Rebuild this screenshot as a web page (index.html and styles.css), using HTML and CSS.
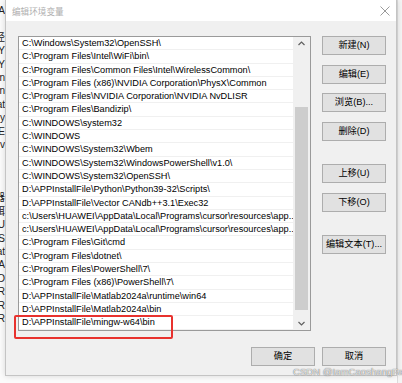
FILE: index.html
```html
<!DOCTYPE html>
<html lang="zh-CN">
<head>
    <meta charset="UTF-8">
    <meta name="viewport" content="width=device-width, initial-scale=1.0">
    <title>编辑环境变量</title>
    <link rel="stylesheet" href="styles.css">
</head>
<body>
    <div class="desk">
        <!-- window behind the dialog, only its edges show -->
        <div class="back-left">
            <span>A</span><span></span><span>径</span><span>Y</span><span>Y</span><span>en</span><span>en</span><span>at</span><span>y</span><span>E</span><span>v</span>
            <span></span><span></span><span></span><span>器</span><span>铒</span><span>U</span><span>S</span><span>at</span><span>A</span><span>O</span><span>R</span><span>R</span><span>R</span>
        </div>
        <div class="back-right"></div>

        <div class="dialog">
            <div class="titlebar">
                <span class="title">编辑环境变量</span>
                <svg class="close" width="10" height="10" viewBox="0 0 10 10">
                    <path d="M0.5 0.5 L9.5 9.5 M9.5 0.5 L0.5 9.5" stroke="#9a9a9a" stroke-width="1" fill="none"/>
                </svg>
            </div>
            <div class="dialog-body">
                <div class="main">
                    <div class="listbox">
                        <ul class="paths">
                            <li>C:\Windows\System32\OpenSSH\</li>
                            <li>C:\Program Files\Intel\WiFi\bin\</li>
                            <li>C:\Program Files\Common Files\Intel\WirelessCommon\</li>
                            <li>C:\Program Files (x86)\NVIDIA Corporation\PhysX\Common</li>
                            <li>C:\Program Files\NVIDIA Corporation\NVIDIA NvDLISR</li>
                            <li>C:\Program Files\Bandizip\</li>
                            <li>C:\WINDOWS\system32</li>
                            <li>C:\WINDOWS</li>
                            <li>C:\WINDOWS\System32\Wbem</li>
                            <li>C:\WINDOWS\System32\WindowsPowerShell\v1.0\</li>
                            <li>C:\WINDOWS\System32\OpenSSH\</li>
                            <li>D:\APPInstallFile\Python\Python39-32\Scripts\</li>
                            <li>D:\APPInstallFile\Vector CANdb++3.1\Exec32</li>
                            <li>c:\Users\HUAWEI\AppData\Local\Programs\cursor\resources\app...</li>
                            <li>c:\Users\HUAWEI\AppData\Local\Programs\cursor\resources\app...</li>
                            <li>C:\Program Files\Git\cmd</li>
                            <li>C:\Program Files\dotnet\</li>
                            <li>C:\Program Files\PowerShell\7\</li>
                            <li>C:\Program Files (x86)\PowerShell\7\</li>
                            <li>D:\APPInstallFile\Matlab2024a\runtime\win64</li>
                            <li>D:\APPInstallFile\Matlab2024a\bin</li>
                            <li>D:\APPInstallFile\mingw-w64\bin</li>
                        </ul>
                        <div class="scrollbar">
                            <svg class="arrow" width="17" height="14" viewBox="0 0 17 14">
                                <path d="M5.5 8 L8.5 5 L11.5 8" stroke="#606060" stroke-width="1.2" fill="none"/>
                            </svg>
                            <div class="track"><div class="thumb"></div></div>
                            <svg class="arrow" width="17" height="14" viewBox="0 0 17 14">
                                <path d="M5.5 6 L8.5 9 L11.5 6" stroke="#606060" stroke-width="1.2" fill="none"/>
                            </svg>
                        </div>
                    </div>
                    <div class="side">
                        <button class="btn">新建(N)</button>
                        <button class="btn">编辑(E)</button>
                        <button class="btn">浏览(B)...</button>
                        <button class="btn">删除(D)</button>
                        <button class="btn gap-big">上移(U)</button>
                        <button class="btn">下移(O)</button>
                        <button class="btn gap-big">编辑文本(T)...</button>
                    </div>
                </div>
                <div class="footer">
                    <button class="btn">确定</button>
                    <button class="btn">取消</button>
                </div>
            </div>
        </div>

        <div class="mark-box"></div>
        <div class="watermark">CSDN @IamCaoshangFa</div>
    </div>
</body>
</html>
```

FILE: styles.css
```css
* {
    box-sizing: border-box;
}
body {
    margin: 0;
    background-color: #fbfbfb;
    font-family: "Liberation Sans", "Noto Sans CJK SC", sans-serif;
    font-size: 9.2px;
    color: #000;
}
.desk {
    position: relative;
    width: 402px;
    height: 383px;
    overflow: hidden;
}

/* background window */
.back-left {
    position: absolute;
    left: -20px;
    top: 4px;
    width: 25px;
    display: flex;
    flex-direction: column;
    align-items: flex-end;
    font-size: 10px;
    line-height: 13.4px;
    color: #222;
}
.back-left span {
    height: 13.4px;
}
.back-right {
    position: absolute;
    left: 397px;
    top: 0;
    width: 5px;
    height: 383px;
    background: #f4f4f4;
    border-left: 1px solid #dcdcdc;
}

/* dialog */
.dialog {
    position: absolute;
    left: 5px;
    top: 0;
    width: 392px;
    height: 376px;
    border: 1px solid #c4c4c4;
    border-top: none;
    background: #f0f0f0;
    box-shadow: 0 0 6px rgba(0, 0, 0, 0.15);
    display: flex;
    flex-direction: column;
}
.titlebar {
    height: 21px;
    background: #fff;
    display: flex;
    align-items: center;
    justify-content: space-between;
    padding: 0 6px 0 6px;
}
.title {
    color: #b0b0b0;
    font-size: 8.6px;
}
.dialog-body {
    flex: 1;
    padding: 15px 10px 0 12px;
}
.main {
    display: flex;
    gap: 11px;
}

/* list of paths */
.listbox {
    width: 293px;
    height: 295px;
    border: 1px solid #9a9a9a;
    background: #fff;
    display: flex;
}
.paths {
    list-style: none;
    margin: 0;
    padding: 0;
    flex: 1;
    min-width: 0;
}
.paths li {
    height: 13.3px;
    line-height: 12.3px;
    padding-left: 3px;
    border-bottom: 1px solid #f0f0f0;
    white-space: nowrap;
    overflow: hidden;
}
.scrollbar {
    width: 17px;
    background: #f0f0f0;
    display: flex;
    flex-direction: column;
}
.arrow {
    display: block;
    flex: none;
}
.track {
    flex: 1;
    padding: 56px 2px 6px 2px;
}
.thumb {
    height: 100%;
    background: #cdcdcd;
}

/* buttons */
.side {
    width: 64px;
    display: flex;
    flex-direction: column;
    gap: 9.5px;
}
.btn {
    width: 64px;
    height: 19px;
    padding: 0;
    border: 1px solid #adadad;
    background: #e1e1e1;
    font-family: "Liberation Sans", "Noto Sans CJK SC", sans-serif;
    font-size: 9.2px;
    color: #000;
    line-height: 17px;
    white-space: nowrap;
}
.gap-big {
    margin-top: 14px;
}
.footer {
    display: flex;
    justify-content: flex-end;
    gap: 7px;
    margin-top: 16px;
}

/* annotation layered over the screenshot */
.mark-box {
    position: absolute;
    left: 14px;
    top: 315px;
    width: 159px;
    height: 24px;
    border: 2px solid #e8322e;
    border-radius: 2px;
}
.watermark {
    position: absolute;
    left: 293px;
    top: 366px;
    font-family: "Liberation Sans", sans-serif;
    font-size: 9.6px;
    white-space: nowrap;
    color: rgba(255, 255, 255, 0.85);
    text-shadow: 0 0 1px rgba(0, 0, 0, 0.55), 0 0 1px rgba(0, 0, 0, 0.35);
}
```
